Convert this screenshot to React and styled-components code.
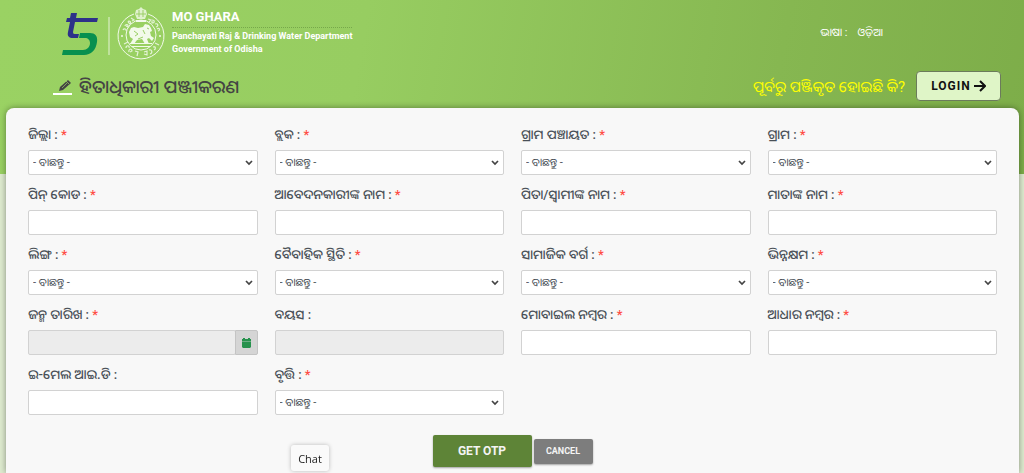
import React from 'react';
import styled, { createGlobalStyle } from 'styled-components';

const GlobalStyle = createGlobalStyle`
  *, *::before, *::after { box-sizing: border-box; }
  body {
    margin: 0;
    background: #deebcf;
    color: #495057;
    font-family: Roboto, "Noto Sans Oriya", "Nirmala UI", "Noto Sans", sans-serif;
    font-size: 14px;
  }
`;

const Page = styled.div`
  min-height: 100vh;
  padding: 0 5px 0 6px;
  background: linear-gradient(100deg, #9ad263 0%, #97cd61 35%, #86b751 75%, #7dad49 100%) top / 100% 174px no-repeat;
`;

const Header = styled.header`
  display: flex;
  justify-content: space-between;
  align-items: flex-start;
  height: 64px;
  padding: 6px 136px 0 55px;
  color: #fff;
`;

const Brand = styled.a`
  display: flex;
  align-items: flex-start;
  color: inherit;
  text-decoration: none;
`;

const Logo = styled.svg`
  display: block;
  width: 104px;
  height: 54px;
  margin-right: 7px;
`;

const BrandText = styled.div`
  display: flex;
  flex-direction: column;
  font-size: 9px;
  font-weight: 700;
  line-height: 13px;
`;

const BrandName = styled.strong`
  padding: 2px 0;
  margin-bottom: 2px;
  border-bottom: 1px dotted #76a84a;
  font-size: 13px;
  font-weight: 700;
  line-height: 17px;
`;

const Language = styled.div`
  display: flex;
  gap: 10px;
  padding-top: 18px;
  font-size: 11px;
  font-weight: 400;
  line-height: 18px;
`;

const LanguageLink = styled.a`
  color: inherit;
  text-decoration: none;
`;

const TitleBar = styled.div`
  display: flex;
  justify-content: space-between;
  align-items: center;
  height: 44px;
  padding: 0 18px 0 47px;
`;

const Title = styled.h1`
  display: flex;
  align-items: center;
  gap: 7px;
  margin: 0;
  padding-top: 2px;
  color: #444;
  font-size: 18px;
  font-weight: 500;
  line-height: 24px;
`;

const PenIcon = styled.svg`
  width: 19px;
  height: 18px;
`;

const LoginPrompt = styled.div`
  display: flex;
  align-items: center;
  gap: 11px;
  color: #ff0;
  font-size: 15px;
  font-weight: 400;
`;

const LoginButton = styled.button`
  display: flex;
  align-items: center;
  justify-content: center;
  gap: 3px;
  width: 85px;
  height: 30px;
  padding: 0;
  border: 1px solid #6b7b5b;
  border-radius: 4px;
  background: #dff5c7;
  color: #111;
  font: 700 12px Roboto, sans-serif;
  letter-spacing: 1px;
`;

const Panel = styled.main`
  min-height: calc(100vh - 108px);
  padding: 14px 22px 6px;
  border-radius: 8px 8px 0 0;
  background: #f8f8f8;
  box-shadow: 0 0 6px rgba(0, 0, 0, 0.4);
`;

const Fields = styled.div`
  display: grid;
  grid-template-columns: repeat(4, minmax(0, 1fr));
  gap: 7px 17px;
`;

const Field = styled.div`
  display: flex;
  flex-direction: column;
  min-width: 0;
`;

const Label = styled.label`
  height: 28px;
  color: #495057;
  font-size: 13px;
  font-weight: 500;
  line-height: 26px;
  white-space: nowrap;
`;

const Required = styled.span`
  color: #ff4d45;
`;

const control = `
  width: 100%;
  height: 25px;
  border: 1px solid #d2d2d2;
  border-radius: 2px;
  color: #495057;
  font-family: inherit;
  font-size: 11px;
`;

const TextInput = styled.input`
  ${control}
  padding: 0 5px;
  background: #fff;
  &:disabled { background: #ececec; }
`;

const SelectBox = styled.div`
  display: grid;
  align-items: center;
  & > * { grid-area: 1 / 1; }
`;

const Select = styled.select`
  ${control}
  appearance: none;
  padding: 0 20px 0 4px;
  background: #fff;
`;

const Chevron = styled.svg`
  justify-self: end;
  width: 8px;
  height: 6px;
  margin-right: 5px;
  pointer-events: none;
`;

const DateGroup = styled.div`
  display: flex;
`;

const DateButton = styled.button`
  display: flex;
  flex: none;
  align-items: center;
  justify-content: center;
  width: 23px;
  height: 25px;
  margin-left: -1px;
  padding: 0;
  border: 1px solid #c4c4c4;
  border-radius: 0 2px 2px 0;
  background: #d5d5d5;
`;

const Actions = styled.div`
  display: flex;
  align-items: center;
  justify-content: center;
  gap: 2px;
  padding-top: 20px;
`;

const ActionButton = styled.button`
  width: ${({ $primary }) => ($primary ? '99px' : '59px')};
  height: ${({ $primary }) => ($primary ? '32px' : '25px')};
  padding: 0;
  border: 0;
  border-radius: 2px;
  background: ${({ $primary }) => ($primary ? '#5e8437' : '#7d7d7d')};
  box-shadow: 0 1px 2px rgba(0, 0, 0, 0.35);
  color: #f4f4f4;
  font: 700 ${({ $primary }) => ($primary ? '12px' : '9px')} Roboto, sans-serif;
`;

const ChatButton = styled.button`
  position: fixed;
  bottom: 2px;
  left: 291px;
  width: 38px;
  height: 26px;
  padding: 0;
  border: 0;
  border-radius: 3px;
  background: #fafafa;
  box-shadow: 0 0 4px rgba(0, 0, 0, 0.25);
  color: #222;
  font: 11px "Open Sans", sans-serif;
`;

const fields = [
  { id: 'district', label: 'ଜିଲ୍ଲା', kind: 'select', required: true },
  { id: 'block', label: 'ବ୍ଲକ', kind: 'select', required: true },
  { id: 'panchayat', label: 'ଗ୍ରାମ ପଞ୍ଚାୟତ', kind: 'select', required: true },
  { id: 'village', label: 'ଗ୍ରାମ', kind: 'select', required: true },
  { id: 'pin', label: 'ପିନ୍ କୋଡ', kind: 'text', required: true },
  { id: 'applicant', label: 'ଆବେଦନକାରୀଙ୍କ ନାମ', kind: 'text', required: true },
  { id: 'father', label: 'ପିତା/ସ୍ୱାମୀଙ୍କ ନାମ', kind: 'text', required: true },
  { id: 'mother', label: 'ମାତାଙ୍କ ନାମ', kind: 'text', required: true },
  { id: 'gender', label: 'ଲିଙ୍ଗ', kind: 'select', required: true },
  { id: 'marital', label: 'ବୈବାହିକ ସ୍ଥିତି', kind: 'select', required: true },
  { id: 'social', label: 'ସାମାଜିକ ବର୍ଗ', kind: 'select', required: true },
  { id: 'disabled', label: 'ଭିନ୍ନକ୍ଷମ', kind: 'select', required: true },
  { id: 'dob', label: 'ଜନ୍ମ ତାରିଖ', kind: 'date', required: true },
  { id: 'age', label: 'ବୟସ', kind: 'readonly' },
  { id: 'mobile', label: 'ମୋବାଇଲ ନମ୍ବର', kind: 'text', required: true },
  { id: 'aadhaar', label: 'ଆଧାର ନମ୍ବର', kind: 'text', required: true },
  { id: 'email', label: 'ଇ-ମେଲ ଆଇ.ଡି', kind: 'text' },
  { id: 'occupation', label: 'ବୃତ୍ତି', kind: 'select', required: true },
];

function Emblem() {
  return (
    <Logo viewBox="0 0 104 54" aria-hidden="true">
      <path d="M10 7h6l-1 5h22l-1 4H14l-2 10c0 2 1 2 3 2h3l-1 4h-5c-4 0-6-2-5-6l2-10H5l1-4h3z" fill="#2d3189" />
      <path d="M19 27h10c5 0 8 3 7 9-1 8-6 13-13 13H1l1-5h20c4 0 7-3 7-7 0-3-2-5-5-5h-6z" fill="#07904f" />
      <path d="M48 11v38" stroke="#e4f3d6" strokeWidth="1" />
      <g fill="none" stroke="#f2faea">
        <path d="M73 8A23 23 0 1 0 87 8" strokeWidth="1" />
        <circle cx="80" cy="29" r="15" strokeWidth="1" />
      </g>
      <g fill="none" stroke="#e4f3d6" strokeWidth="1.2">
        <path d="M62 24c1-2 4-1 3 1M64 20c0-2 4-2 3 1l-2-1M67 16c1-2 4 0 2 2l-2-2M70 12l3 2-2 1" />
        <path d="M87 13l3 1-2 2M91 14c3 0 3 3 0 3l0-2M94 18c3-1 4 2 1 3M96 23c2-2 4 1 1 2" />
        <path d="M63 38l4-2M65 42c0-3 4-3 3 0M68 46c-1-3 3-4 3-1l-2 1M74 45l3 1-1 4" />
        <path d="M83 46l3-1v4l-3-1M88 44c3-1 4 3 1 4M92 41c3-1 3 2 1 3M94 37l4 2" />
      </g>
      <g fill="#f2faea">
        <circle cx="61" cy="30" r="1" />
        <circle cx="99" cy="30" r="1" />
        <path d="M75 4l3-1 2-2 2 2 3 1 1 4-2 5H76l-2-5z" opacity="0.8" />
        <path d="M75 14h10v2H75z" />
        <path d="M68 26l2-4 3-1 4 1 5-1 2-3 4 1 2 3 1 3-2 1 1 4 3 2-2 3-3-3-2 1 2 5h-4l-3-5-5 1-3 4h-4l3-5-3-2z" />
        <path d="M69 37h22v1H69zM71 40h18v1H71z" />
      </g>
      <path d="M78 4v7M82 4v7M75 8h10M73 25l4 3-3 2M82 24l2 4M77 33l5-2M86 22l2 1" stroke="#9bcf66" fill="none" />
    </Logo>
  );
}

function FieldControl({ field }) {
  if (field.kind === 'select') {
    return (
      <SelectBox>
        <Select id={field.id}>
          <option>- ବାଛନ୍ତୁ -</option>
        </Select>
        <Chevron viewBox="0 0 8 6" fill="none" stroke="#444" strokeWidth="1.7" aria-hidden="true">
          <path d="M1 1l3 3 3-3" />
        </Chevron>
      </SelectBox>
    );
  }
  if (field.kind === 'date') {
    return (
      <DateGroup>
        <TextInput id={field.id} type="text" disabled />
        <DateButton type="button" aria-label="Choose date">
          <svg width="9" height="10" viewBox="0 0 9 10" fill="#27924d">
            <path d="M0 1h1V0h2v1h3V0h2v1h1v2H0zM0 4h9v5l-1 1H1L0 9z" />
            <path d="M0 3h9v1H0z" opacity="0.6" />
          </svg>
        </DateButton>
      </DateGroup>
    );
  }
  return <TextInput id={field.id} type="text" disabled={field.kind === 'readonly'} />;
}

export default function App() {
  return (
    <Page>
      <GlobalStyle />
      <Header>
        <Brand href="#">
          <Emblem />
          <BrandText>
            <BrandName>MO GHARA</BrandName>
            <span>Panchayati Raj &amp; Drinking Water Department</span>
            <span>Government of Odisha</span>
          </BrandText>
        </Brand>
        <Language>
          <span>ଭାଷା :</span>
          <LanguageLink href="#">ଓଡ଼ିଆ</LanguageLink>
        </Language>
      </Header>
      <TitleBar>
        <Title>
          <PenIcon viewBox="0 0 19 18" aria-hidden="true">
            <path d="M6 13l1-4 8-7 3 3-8 7z" fill="#444" />
            <path d="M13 3l3 3M9 10l5-5" stroke="#9bcf66" strokeWidth="0.7" />
            <path d="M0 16h19" stroke="#fff" strokeWidth="2" />
          </PenIcon>
          ହିତାଧିକାରୀ ପଞ୍ଜୀକରଣ
        </Title>
        <LoginPrompt>
          <span>ପୂର୍ବରୁ ପଞ୍ଜିକୃତ ହୋଇଛି କି?</span>
          <LoginButton type="button">
            LOGIN
            <svg width="12" height="12" viewBox="0 0 12 12" fill="none" stroke="#111" strokeWidth="2" aria-hidden="true">
              <path d="M0 6h10M6 1l5 5-5 5" />
            </svg>
          </LoginButton>
        </LoginPrompt>
      </TitleBar>
      <Panel>
        <form onSubmit={(e) => e.preventDefault()}>
          <Fields>
            {fields.map((field) => (
              <Field key={field.id}>
                <Label htmlFor={field.id}>
                  {field.label} : {field.required && <Required>*</Required>}
                </Label>
                <FieldControl field={field} />
              </Field>
            ))}
          </Fields>
          <Actions>
            <ActionButton type="submit" $primary>GET OTP</ActionButton>
            <ActionButton type="reset">CANCEL</ActionButton>
          </Actions>
        </form>
      </Panel>
      <ChatButton type="button">Chat</ChatButton>
    </Page>
  );
}
